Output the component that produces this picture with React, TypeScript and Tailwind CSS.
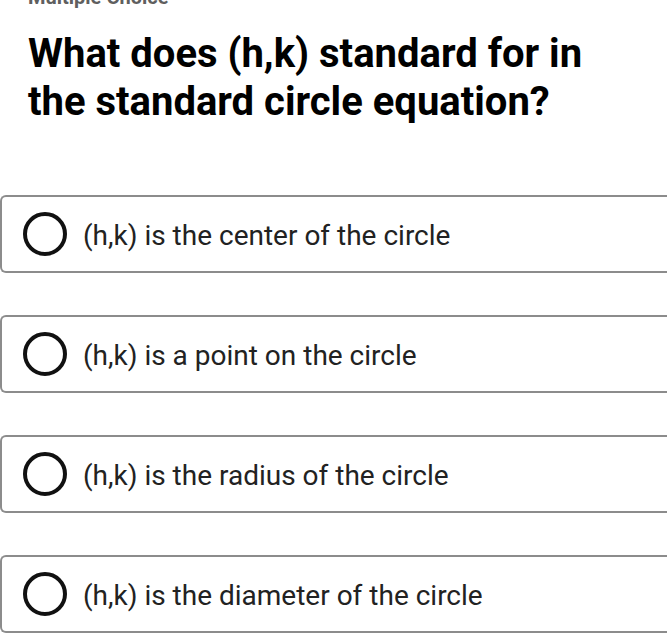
const options = [
	"(h,k) is the center of the circle",
	"(h,k) is a point on the circle",
	"(h,k) is the radius of the circle",
	"(h,k) is the diameter of the circle"
]

const RadioCircle = () => (
	<svg width="44" height="44" viewBox="0 0 44 44" className="shrink-0">
		<circle cx="22" cy="22" r="20" fill="none" stroke="#111111" strokeWidth="4" />
	</svg>
)

export default function App() {
	return (
		<div className="min-h-screen bg-white overflow-hidden font-['Roboto',sans-serif]">
			<div className="-mt-[16px] pl-[28px] text-[20px] leading-[26px] font-bold text-[#5f5f5f]">
				Multiple Choice
			</div>
			<h1 className="mt-[20px] pl-[28px] pr-[30px] text-[40px] leading-[48px] font-bold text-black">
				What does (h,k) standard for in the standard circle equation?
			</h1>
			<div className="mt-[69px] flex flex-col gap-[42px]">
				{options.map((label) => (
					<div
						key={label}
						className="h-[78px] flex items-center gap-[16px] pl-[21px] border-2 border-r-0 border-[#8c8c8c] rounded-l-[6px]"
					>
						<RadioCircle />
						<span className="mt-[4px] text-[28px] text-[#222222]">{label}</span>
					</div>
				))}
			</div>
		</div>
	)
}
